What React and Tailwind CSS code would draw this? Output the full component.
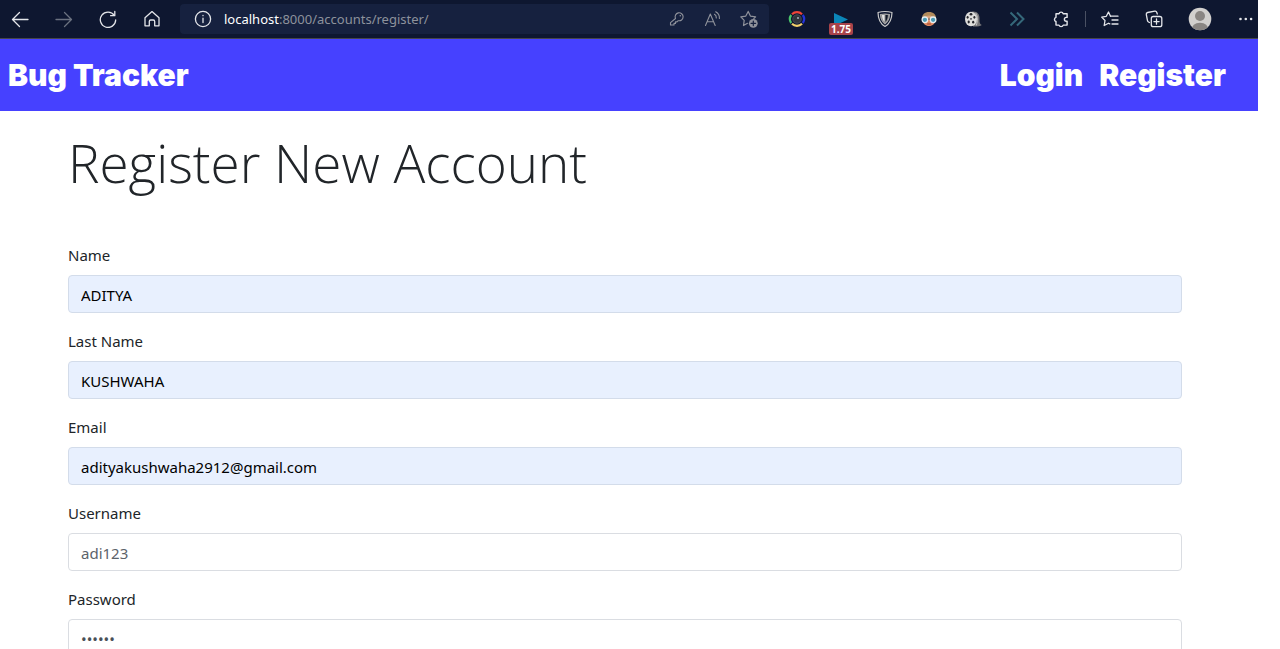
import React from 'react';

const iconProps = {
  width: 18,
  height: 18,
  viewBox: '0 0 18 18',
  fill: 'none',
  stroke: 'currentColor',
  strokeWidth: 1.3,
  strokeLinecap: 'round',
  strokeLinejoin: 'round',
  'aria-hidden': true,
};

const BackIcon = () => (
  <svg {...iconProps}>
    <path d="M17 9.5H1.5M8.5 2.5l-7 7 7 7" />
  </svg>
);

const ForwardIcon = () => (
  <svg {...iconProps}>
    <path d="M1 9.5h15.5M9.5 2.5l7 7-7 7" />
  </svg>
);

const ReloadIcon = () => (
  <svg {...iconProps}>
    <path d="M15.3 5.3A7.7 7.7 0 1 0 16.7 10" />
    <path d="M15.8 1.5v4.2h-4.2" />
  </svg>
);

const HomeIcon = () => (
  <svg {...iconProps}>
    <path d="M2 7.7 9 1.6l7 6.1v8.1h-4.3v-4.4c0-.8-.6-1.4-1.4-1.4H7.7c-.8 0-1.4.6-1.4 1.4v4.4H2z" />
  </svg>
);

const InfoIcon = () => (
  <svg {...iconProps}>
    <circle cx="9" cy="9" r="7.6" />
    <path d="M9 8.2v4.3M9 5.5v.2" />
  </svg>
);

const KeyIcon = () => (
  <svg {...iconProps} strokeWidth={1.1}>
    <path d="M7.5 8.5a4 4 0 1 1 2.7 2.2L9 11.900H7.5v1.5H6V15H2.500v-2.300z" />
    <circle cx="12.300" cy="5.700" r=".8" fill="currentColor" stroke="none" />
  </svg>
);

const ReadAloudIcon = () => (
  <svg {...iconProps} strokeWidth={1.1}>
    <path d="M1.500 15.500 6.300 4l4.900 11.500M3 11.800h6.700" />
    <path d="M10.500 4.300a4 4 0 0 1 1.800 3.700M11.700 1.800a7 7 0 0 1 3.700 6.700" />
  </svg>
);

const AddFavoriteIcon = () => (
  <svg {...iconProps} strokeWidth={1.2}>
    <path d="m7.500 13.300-4 2.200.7-5.100L.8 6.900l5-.8L8.200 1.400l2.200 4.700 5.200.8-1.800 1.700" />
    <circle cx="13.300" cy="13.300" r="4.400" fill="currentColor" stroke="none" />
    <path d="M13.300 11v4.600M11 13.300h4.600" stroke="#16213f" />
  </svg>
);

const LensIcon = () => (
  <svg {...iconProps} strokeWidth={2.2} strokeLinecap="butt">
    <path d="M4 4.200a7 7 0 0 1 10 0" stroke="#f04438" />
    <path d="M14.800 5a7 7 0 0 1 0 8" stroke="#2433d8" />
    <path d="M14 13.800a7 7 0 0 1-10 0" stroke="#f3d06b" />
    <path d="M3.200 13a7 7 0 0 1 0-8" stroke="#4ac46b" />
    <circle cx="9" cy="9" r="4.200" fill="#30343c" stroke="#444a55" strokeWidth={1} />
    <circle cx="10" cy="8" r="1" fill="#aab0bd" stroke="none" />
  </svg>
);

const ShieldIcon = () => (
  <svg {...iconProps} strokeWidth={1.2} stroke="#c9c9c9">
    <path d="M9 1.500c2.300 0 4.700.3 7 1-.1 6.200-2.300 11.300-7 14-4.700-2.700-6.900-7.800-7-14 2.300-.7 4.700-1 7-1z" />
    <path d="M9 4c1.500 0 3 .2 4.500.5-.3 4.300-1.700 7.300-4.500 9.300-2.800-2-4.200-5-4.500-9.300C6 4.200 7.500 4 9 4z" fill="#8d8d8d" stroke="#a8a8a8" />
    <path d="M9.500 5h2.300c0 3-.6 5-2.300 6.800z" fill="#111827" stroke="none" />
    <path d="M6 5h2.500v6.800C6.800 10 6.100 8 6 5z" fill="#e5e5e5" stroke="none" />
  </svg>
);

const GogglesIcon = () => (
  <svg {...iconProps} stroke="none">
    <path d="M2.500 9.500h13c0 4-2.800 6.500-6.500 6.500s-6.500-2.500-6.500-6.500z" fill="#e08a62" />
    <path d="M2 8.500C2 4.500 4.500 2 9 2s7 2.500 7 6.500z" fill="#b08a5b" />
    <path d="M4 8.500C5 6.500 7 5.500 9 5.500s4 1 5 3z" fill="#d9a37c" />
    <circle cx="4.900" cy="9.800" r="2.800" fill="#4a9bb5" stroke="#e6eef2" strokeWidth={1.3} />
    <circle cx="13.100" cy="9.800" r="2.800" fill="#4a9bb5" stroke="#e6eef2" strokeWidth={1.3} />
    <path d="M7.500 14h3" stroke="#a3452f" strokeWidth={1} />
  </svg>
);

const FilmReelIcon = () => (
  <svg {...iconProps} stroke="none">
    <path d="M8 1.500c5-.8 8 2.500 7.500 8-.2 3 .3 4.700 2.300 5.500-1.800 1.500-5 1.600-8.800 1.500z" fill="#77777a" />
    <path d="M12 3.500c2 3 1.500 7.500.5 11.500" stroke="#c9c9c9" strokeWidth={1} />
    <ellipse cx="7" cy="9" rx="6" ry="7.300" fill="#dededc" />
    <g fill="#25262c">
      <ellipse cx="7" cy="4.200" rx="1.400" ry="1.200" />
      <ellipse cx="3.600" cy="7.300" rx="1" ry="1.400" />
      <ellipse cx="10.400" cy="7.300" rx="1" ry="1.400" />
      <ellipse cx="4.700" cy="12" rx="1.100" ry="1.400" />
      <ellipse cx="9.200" cy="12.200" rx="1.100" ry="1.400" />
      <circle cx="7" cy="8.900" r=".8" />
    </g>
  </svg>
);

const ChevronsIcon = () => (
  <svg {...iconProps} stroke="#35687a" strokeWidth={2} strokeLinecap="butt" strokeLinejoin="miter">
    <path d="M2.500 2.500 9 9l-6.500 6.500M9 2.500 15.500 9 9 15.500" />
  </svg>
);

// tabs stick out at the top and bottom, left side bulges, right side is notched
const PuzzleIcon = () => (
  <svg {...iconProps} strokeWidth={1.4}>
    <path d="M4 3.700h3a2.200 2.200 0 0 1 4.200 0h3.900v3.700h-.8a1.900 1.900 0 0 0 0 3.800h.8v3.900h-3.900a2.200 2.200 0 0 1-4.200 0H4v-3.600a2.200 2.200 0 0 1 0-4.200z" />
  </svg>
);

const FavoritesIcon = () => (
  <svg {...iconProps}>
    <path d="M9.500 6.200h7.500M11 10h6M11 14h6" />
    <path d="M9.500 6.200 7.500 2 5.300 6.300l-4.600.8L4 10.500l-.8 5 4.300-2.300 1.300.7" />
  </svg>
);

const CollectionsIcon = () => (
  <svg {...iconProps}>
    <rect x="6.300" y="6.500" width="10.500" height="10.200" rx="2" />
    <path d="M11.500 9v5.200M8.900 11.600h5.200" />
    <path d="m4.500 12.500-1-.5c-.6-.3-.9-.8-1-1.400L1.300 4.500c-.2-1 .4-1.800 1.300-2l7.200-1.300c1-.2 1.700.4 2 1.300l.5 1.500" />
  </svg>
);

const ProfileIcon = () => (
  <svg width="24" height="24" viewBox="0 0 24 24" aria-hidden="true">
    <clipPath id="profile-clip">
      <circle cx="12" cy="12" r="11.300" />
    </clipPath>
    <circle cx="12" cy="12" r="11.300" fill="#d2d0ce" />
    <g fill="#8a8683" clipPath="url(#profile-clip)">
      <circle cx="12" cy="9" r="5" />
      <path d="M3.500 24c0-5.500 3.500-8.300 8.500-8.300s8.500 2.800 8.500 8.300z" />
    </g>
  </svg>
);

const MoreIcon = () => (
  <svg {...iconProps} fill="currentColor" stroke="none">
    <circle cx="3.500" cy="9" r="1.300" />
    <circle cx="8.800" cy="9" r="1.300" />
    <circle cx="14.100" cy="9" r="1.300" />
  </svg>
);

const ToolButton = ({ label, className = 'w-10', children }) => (
  <button
    type="button"
    aria-label={label}
    className={`relative flex h-8 shrink-0 items-center justify-center ${className}`}
  >
    {children}
  </button>
);

const BrowserBar = () => (
  <div className="flex h-[39px] items-center gap-1 border-b border-[#46464c] bg-[#0e1730] text-[#e4e6ea]">
    <ToolButton label="Back"><BackIcon /></ToolButton>
    <ToolButton label="Forward" className="w-10 text-[#6b7280]"><ForwardIcon /></ToolButton>
    <ToolButton label="Reload"><ReloadIcon /></ToolButton>
    <ToolButton label="Home"><HomeIcon /></ToolButton>

    <div className="mx-1 flex h-[30px] min-w-0 flex-1 items-center rounded bg-[#16213f] pr-0.5 pl-3.5">
      <InfoIcon />
      <p className="ml-3 flex-1 truncate font-['Noto_Sans',sans-serif] text-[13px] leading-5 text-[#8d929c]">
        <span className="text-white">localhost</span>:8000/accounts/register/
      </p>
      <div className="flex text-[#8f929b]">
        <ToolButton label="Saved passwords" className="w-9"><KeyIcon /></ToolButton>
        <ToolButton label="Read aloud" className="w-9"><ReadAloudIcon /></ToolButton>
        <ToolButton label="Add to favorites" className="w-9"><AddFavoriteIcon /></ToolButton>
      </div>
    </div>

    <ToolButton label="Lens"><LensIcon /></ToolButton>
    <ToolButton label="Video speed">
      <svg width="14" height="14" viewBox="0 0 14 14" aria-hidden="true">
        <path d="M0 1l14 6.500L0 14z" fill="#0b86b8" />
      </svg>
      <span className="absolute bottom-0 rounded-xs bg-[#a8434a] px-0.5 font-['Open_Sans',sans-serif] text-[10px] leading-3 font-bold text-white">
        1.75
      </span>
    </ToolButton>
    <ToolButton label="Shield"><ShieldIcon /></ToolButton>
    <ToolButton label="Goggles"><GogglesIcon /></ToolButton>
    <ToolButton label="Film"><FilmReelIcon /></ToolButton>
    <ToolButton label="Skip"><ChevronsIcon /></ToolButton>
    <ToolButton label="Extensions"><PuzzleIcon /></ToolButton>
    <span className="h-4 w-px bg-[#4a5163]" />
    <ToolButton label="Favorites"><FavoritesIcon /></ToolButton>
    <ToolButton label="Collections"><CollectionsIcon /></ToolButton>
    <ToolButton label="Profile" className="w-11"><ProfileIcon /></ToolButton>
    <ToolButton label="Settings and more" className="w-8 pl-2"><MoreIcon /></ToolButton>
  </div>
);

const NavBar = () => (
  <nav className="flex h-[72px] items-center justify-between bg-[#4641ff] pr-8 pl-2 font-['Inter',sans-serif] text-[30px] leading-10 font-black text-white">
    <a href="#home">Bug Tracker</a>
    <div className="flex gap-4">
      <a href="#login">Login</a>
      <a href="#register">Register</a>
    </div>
  </nav>
);

const fields = [
  { id: 'first_name', label: 'Name', type: 'text', value: 'ADITYA', autofilled: true },
  { id: 'last_name', label: 'Last Name', type: 'text', value: 'KUSHWAHA', autofilled: true },
  { id: 'email', label: 'Email', type: 'email', value: 'adityakushwaha2912@gmail.com', autofilled: true },
  { id: 'username', label: 'Username', type: 'text', placeholder: 'adi123' },
  { id: 'password', label: 'Password', type: 'password', value: 'adi123' },
];

const Field = ({ id, label, type, value, placeholder, autofilled }) => (
  <div className="mb-4">
    <label htmlFor={id} className="mb-2 block">{label}</label>
    <input
      id={id}
      type={type}
      defaultValue={value}
      placeholder={placeholder}
      className={`block h-[38px] w-full rounded border px-3 pt-0.5 placeholder:text-[#5c636a] ${
        autofilled ? 'border-[#d3dcea] bg-[#e8f0fe] text-black' : 'border-[#dadde2] bg-white text-[#495057]'
      }`}
    />
  </div>
);

export default function App() {
  return (
    <div className="h-screen overflow-hidden bg-white pr-[22px]">
      <BrowserBar />
      <NavBar />
      <main className="pr-[76px] pl-[68px] font-['Noto_Sans',sans-serif] text-[15px] leading-6 text-[#212529]">
        <h1 className="pt-5 pb-12 font-['Open_Sans',sans-serif] text-[53px] leading-[64px] font-light">
          Register New Account
        </h1>
        <form>
          {fields.map((field) => (
            <Field key={field.id} {...field} />
          ))}
        </form>
      </main>
    </div>
  );
}
